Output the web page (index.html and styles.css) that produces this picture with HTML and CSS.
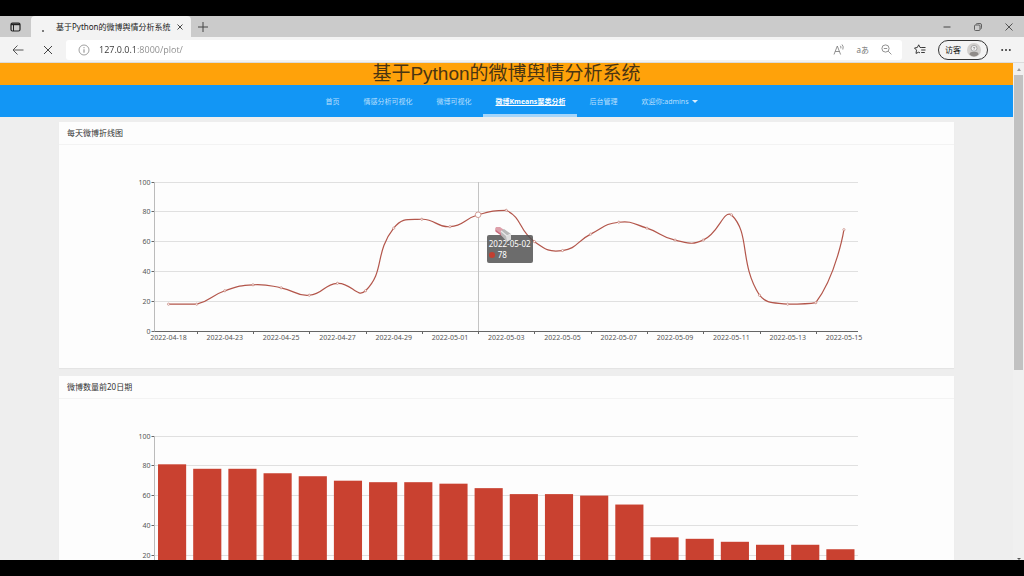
FILE: index.html
```html
<!DOCTYPE html>
<html lang="zh-CN">
<head>
<meta charset="utf-8">
<title>基于Python的微博舆情分析系统</title>
<link rel="stylesheet" href="styles.css">
</head>
<body>
<div class="browser">
  <header class="tabstrip">
    <button class="tab-menu" aria-label="标签页菜单">
      <svg width="11" height="10" viewBox="0 0 11 10"><rect x="1" y="1" width="9" height="8" rx="1.5" fill="none" stroke="#222" stroke-width="1.2"/><path d="M1 2.300h9" stroke="#222" stroke-width="1.800"/><path d="M3.500 3v6" stroke="#222"/></svg>
    </button>
    <div class="tab">
      <span class="tab-spinner"></span>
      <span class="tab-title">基于Python的微博舆情分析系统</span>
      <button aria-label="关闭标签页"><svg width="6" height="6" viewBox="0 0 6 6"><path d="M.5.5l5 5M5.500.5l-5 5" stroke="#333" stroke-width=".9"/></svg></button>
    </div>
    <button class="new-tab" aria-label="新建标签页"><svg width="10" height="10" viewBox="0 0 10 10"><path d="M5 0v10M0 5h10" stroke="#444"/></svg></button>
    <div class="window-buttons">
      <button aria-label="最小化"><svg width="8" height="8" viewBox="0 0 8 8"><path d="M.5 4h7" stroke="#444"/></svg></button>
      <button aria-label="还原"><svg width="8" height="8" viewBox="0 0 8 8"><rect x=".5" y="2" width="5.500" height="5.500" rx="1" fill="none" stroke="#555" stroke-width=".9"/><path d="M2 1.500Q2.200.5 3.200.5H6q1.500 0 1.500 1.500v2.800q0 1-1 1.200" fill="none" stroke="#555" stroke-width=".9"/></svg></button>
      <button aria-label="关闭"><svg width="8" height="8" viewBox="0 0 8 8"><path d="M.5.5l7 7M7.500.5l-7 7" stroke="#444" stroke-width=".9"/></svg></button>
    </div>
  </header>

  <div class="toolbar">
    <button class="back" aria-label="后退"><svg width="12" height="10" viewBox="0 0 12 10"><path d="M5.500.5L1 5l4.500 4.500M1 5h10.500" fill="none" stroke="#555"/></svg></button>
    <button class="stop" aria-label="停止"><svg width="8" height="8" viewBox="0 0 8 8"><path d="M0 0l8 8M8 0L0 8" stroke="#444"/></svg></button>
    <div class="address">
      <svg width="12" height="12" viewBox="0 0 12 12"><circle cx="6" cy="6" r="5" fill="none" stroke="#888" stroke-width=".8"/><path d="M6 5.300v3.400M6 3.200v1" stroke="#777" stroke-width=".9"/></svg>
      <input class="url" type="text" aria-label="地址" value="127.0.0.1:8000/plot/">
      <button aria-label="朗读"><svg width="12" height="12" viewBox="0 0 12 12"><path d="M1 10.500L4.300 2l3.300 8.500M2.200 7.500h4.300M7.300 1.800q1 1 .5 2.600M9 .5q2 2 .8 5" fill="none" stroke="#777" stroke-width=".8"/></svg></button>
      <button class="translate" aria-label="翻译">aあ</button>
      <button aria-label="缩小"><svg width="11" height="11" viewBox="0 0 11 11"><circle cx="4.500" cy="4.500" r="3.600" fill="none" stroke="#777" stroke-width=".8"/><path d="M2.800 4.500h3.400M7.200 7.200l3.200 3.200" stroke="#777" stroke-width=".8"/></svg></button>
    </div>
    <button class="favorites" aria-label="收藏夹"><svg width="12" height="12" viewBox="0 0 12 12"><path d="M7.200 3.500H6.100L4.700.8 3.300 3.500.5 4l2 2.100-.5 3.300 2.700-1.200 1.300.7M7.200 3.500h4.300M7.200 6h4.300M7.200 8.500h3.600" fill="none" stroke="#222" stroke-width=".9"/></svg></button>
    <button class="profile">访客
      <svg width="14" height="14" viewBox="0 0 14 14"><circle cx="7" cy="7" r="7" fill="#d1cfcd"/><path d="M2.500 11.500q0-2.500 2.500-2.500h4q2.500 0 2.500 2.500Q9.500 13.500 7 13.500t-4.500-2" fill="#8f8b88"/><circle cx="7" cy="5.300" r="3" fill="#eee" stroke="#999" stroke-width=".8"/><path d="M6.200 4.600q.8-1 1.500 0 .1.600-.7 1.200M7 6.500v.6" fill="none" stroke="#666" stroke-width=".7"/></svg>
    </button>
    <button class="more" aria-label="更多"><svg width="10" height="4" viewBox="0 0 10 4"><g fill="#333"><circle cx="1.200" cy="2" r="1"/><circle cx="5" cy="2" r="1"/><circle cx="8.800" cy="2" r="1"/></g></svg></button>
  </div>

  <div class="viewport">
    <main class="page">
      <h1 class="banner">基于Python的微博舆情分析系统</h1>
      <nav class="nav">
        <a href="#">首页</a>
        <a href="#">情感分析可视化</a>
        <a href="#">微博可视化</a>
        <a href="#" class="active">微博Kmeans聚类分析</a>
        <a href="#">后台管理</a>
        <a href="#" class="user">欢迎你:admins <i class="caret"></i></a>
      </nav>
      <div class="cards">
        <section class="card">
          <h2>每天微博折线图</h2>
          <div class="chart">
            <svg id="line-chart" viewBox="0 0 895 223"></svg>
            <div class="tooltip">
              <div>2022-05-02</div>
              <div class="tooltip-row"><i class="dot"></i>78</div>
            </div>
            <svg class="pointer" width="20" height="18" viewBox="0 0 20 18"><path d="M1 3l1-2 4 0 7 5-3 5-8-5z" fill="#dda0aa"/><path d="M1.500 4.500l8 6" stroke="#c76b7c" stroke-width="1.500"/><path d="M7 5l3-2 7 5v5l-4 3-6-7z" fill="#b9b9b9"/><path d="M7 5l6 5 4-2" fill="none" stroke="#e8e8e8" stroke-width="1.300"/><path d="M12 10l5-1.500v5l-4 2z" fill="#ddd"/></svg>
          </div>
        </section>
        <section class="card">
          <h2>微博数量前20日期</h2>
          <div class="chart">
            <svg id="bar-chart" viewBox="0 0 895 223"></svg>
          </div>
        </section>
      </div>
    </main>
    <div class="scrollbar">
      <i class="arrow-up"></i>
      <div class="thumb"></div>
      <i class="arrow-down"></i>
    </div>
  </div>
</div>
<script src="script.js"></script>
</body>
</html>
```

FILE: styles.css
```css
* { box-sizing: border-box; }

body {
  margin: 0;
  height: 100vh;
  padding: 16px 0;
  background: #000;
  font-family: "Noto Sans", "Noto Sans CJK SC", sans-serif;
  font-size: 8px;
  color: #333;
  overflow: hidden;
}

svg { display: block; flex: none; }

button {
  display: flex;
  align-items: center;
  justify-content: center;
  flex: none;
  padding: 0;
  border: 0;
  background: none;
  font: inherit;
  color: inherit;
}

.browser {
  height: 100%;
  display: flex;
  flex-direction: column;
  background: #f3f3f3;
}

/* Tabs */
.tabstrip {
  flex: none;
  height: 21px;
  display: flex;
  background: #cbcbcb;
}

.tab-menu { width: 31px; }

.tab {
  display: flex;
  align-items: center;
  width: 160px;
  padding: 0 8px 0 11px;
  border-radius: 4px 4px 0 0;
  background: #f3f3f3;
}

.tab-spinner {
  width: 2px;
  height: 2px;
  margin-top: 8px;
  border-radius: 50%;
  background: #555;
}

.tab-title {
  flex: 1;
  margin-left: 12px;
  white-space: nowrap;
  color: #222;
}

.new-tab { width: 24px; }

.window-buttons {
  display: flex;
  margin-left: auto;
}

.window-buttons button { width: 31px; }

/* Address bar */
.toolbar {
  flex: none;
  height: 26px;
  display: flex;
  align-items: center;
  border-bottom: 1px solid #dcdcdc;
}

.back { width: 36px; }
.stop { width: 24px; }

.address {
  flex: 1;
  display: flex;
  align-items: center;
  height: 20px;
  margin-left: 6px;
  padding: 0 10px 0 12px;
  gap: 12px;
  border-radius: 3px;
  background: #fff;
}

.url {
  flex: 1;
  min-width: 0;
  margin-left: -3px;
  padding: 0;
  border: 0;
  outline: 0;
  font-family: "Open Sans", "Noto Sans CJK SC", sans-serif;
  font-size: 9px;
  color: transparent;
  background: linear-gradient(to right, #333 38px, #8a8a8a 38px);
  background-clip: text;
  -webkit-background-clip: text;
}

.translate { color: #777; }
.favorites { width: 36px; }

.profile {
  width: 50px;
  height: 20px;
  gap: 6px;
  border: 1px solid #333;
  border-radius: 10px;
  color: #111;
}

.more { width: 36px; }

/* Web page */
.viewport {
  flex: 1;
  min-height: 0;
  display: flex;
  background: #eee;
}

.page {
  flex: 1;
  min-width: 0;
  overflow: hidden;
}

.banner {
  margin: 0;
  height: 22px;
  line-height: 22px;
  background: #ffa20a;
  color: #4a3512;
  font-family: "Liberation Sans", "Noto Sans CJK SC", sans-serif;
  font-size: 19px;
  font-weight: 400;
  text-align: center;
}

.nav {
  display: flex;
  justify-content: center;
  height: 32px;
  margin-bottom: 5px;
  padding-left: 10px;
  background: #1296f5;
  font-size: 7px;
}

.nav a {
  display: flex;
  align-items: center;
  padding: 3px 12px 0;
  border-bottom: 3px solid transparent;
  color: #b8dffc;
  text-decoration: none;
  white-space: nowrap;
}

.nav .active {
  border-color: #a5d5fa;
  color: #fff;
  font-weight: 700;
  text-decoration: underline;
}

.caret {
  margin-left: 3px;
  border: 3px solid transparent;
  border-top-color: #d8edfd;
  border-bottom: 0;
}

.cards {
  display: flex;
  flex-direction: column;
  gap: 8px;
  padding: 0 59px;
}

.card {
  background: #fdfdfd;
  box-shadow: 0 1px 1px #e4e4e4;
}

.card h2 {
  margin: 0;
  padding: 0 8px;
  border-bottom: 1px solid #f3f3f3;
  font-size: 8px;
  font-weight: 400;
  line-height: 22px;
  color: #333;
}

.chart { position: relative; }

.chart > svg:first-child {
  width: 100%;
  height: auto;
}

.axis-text {
  font-size: 7px;
  fill: #555;
}

.grid { stroke: #e0e0e0; }
.axis { stroke: #666; }
.axis-y { stroke: #bbb; }
.crosshair { stroke: #c4c4c4; }
.curve { fill: none; stroke: #b3564b; stroke-width: 1.2; }
.point { fill: #fff; stroke: #c98a82; stroke-width: .8; }
.bar { fill: #c94130; }

.tooltip {
  position: absolute;
  left: 47.8%;
  top: 90px;
  padding: 3px 2px;
  border-radius: 2px;
  background: rgba(80, 80, 80, .84);
  color: #fff;
  line-height: 11px;
}

.tooltip-row {
  display: flex;
  align-items: center;
}

.dot {
  width: 6px;
  height: 6px;
  margin-right: 3px;
  border-radius: 50%;
  background: #c23f31;
}

.pointer {
  position: absolute;
  left: 48.6%;
  top: 81px;
}

/* Scrollbar */
.scrollbar {
  flex: none;
  width: 11px;
  display: flex;
  flex-direction: column;
  align-items: center;
  padding-top: 5px;
  background: #f0f0f0;
}

.arrow-up {
  border: 2px solid transparent;
  border-bottom: 3px solid #999;
  border-top: 0;
}

.thumb {
  width: 9px;
  height: 60%;
  margin-top: 4px;
  background: #c1c1c1;
}

.arrow-down {
  margin-top: auto;
  border: 2px solid transparent;
  border-top-color: #555;
  border-bottom: 0;
}
```

FILE: script.js
```js
const daily = [18, 18, 27, 31, 29, 24, 32, 27, 69, 75, 70, 78, 81, 60, 54, 65, 73, 69, 61, 61, 78, 24, 18, 19, 68];
const dates = ['04-18', '04-23', '04-25', '04-27', '04-29', '05-01', '05-03', '05-05', '05-07', '05-09', '05-11', '05-13', '05-15'];
const top20 = [81, 78, 78, 75, 73, 70, 69, 69, 68, 65, 61, 61, 60, 54, 32, 31, 29, 27, 27, 24];
const plot = { left: 95.5, right: 799, top: 37, bottom: 186 };
const yOf = v => plot.bottom - v * (plot.bottom - plot.top) / 100;

function line(x1, y1, x2, y2, cls) {
  return `<line x1="${x1}" y1="${y1}" x2="${x2}" y2="${y2}" class="${cls}"/>`;
}

function axes(from) {
  let out = '';
  for (let v = from; v <= 100; v += 20) {
    const y = Math.floor(yOf(v)) + 0.5;
    out += line(plot.left, y, plot.right, y, v ? 'grid' : 'axis');
    out += line(plot.left - 3, y, plot.left, y, 'axis');
    out += `<text class="axis-text" x="${plot.left - 4}" y="${y + 2}" text-anchor="end">${v}</text>`;
  }
  return out + line(plot.left, plot.top, plot.left, plot.bottom, 'axis-y');
}

// Bezier smoothing whose control points stay inside the bounds of the data.
function smoothPath(pts) {
  const ys = pts.map(p => p[1]);
  const low = Math.min(...ys);
  const high = Math.max(...ys);
  const clamp = p => [p[0], Math.min(high, Math.max(low, p[1]))];
  let d = `M${pts[0]}`;
  let out = pts[0];
  for (let i = 1; i < pts.length; i++) {
    const p = pts[i];
    const prev = pts[i - 1];
    const next = pts[i + 1];
    let cp = p;
    let after = p;
    if (next) {
      const v = [next[0] - prev[0], next[1] - prev[1]];
      const a = Math.hypot(p[0] - prev[0], p[1] - prev[1]);
      const b = Math.hypot(next[0] - p[0], next[1] - p[1]);
      const r = b / (a + b);
      cp = clamp([p[0] - v[0] * 0.5 * (1 - r), p[1] - v[1] * 0.5 * (1 - r)]);
      after = clamp([p[0] + v[0] * 0.5 * r, p[1] + v[1] * 0.5 * r]);
    }
    d += `C${out} ${cp} ${p}`;
    out = after;
  }
  return d;
}

function drawLine() {
  const band = (plot.right - plot.left) / daily.length;
  const pts = daily.map((v, i) => [plot.left + band * (i + 0.5), yOf(v)]);
  let out = axes(0);
  dates.forEach((d, k) => {
    out += `<text class="axis-text" x="${pts[k * 2][0]}" y="195" text-anchor="middle">2022-${d}</text>`;
    if (k) {
      const x = Math.round(pts[k * 2 - 1][0]) + 0.5;
      out += line(x, plot.bottom, x, plot.bottom + 3, 'axis');
    }
  });
  const hover = 11;
  const hx = Math.floor(pts[hover][0]) + 0.5;
  out += line(hx, plot.top, hx, plot.bottom, 'crosshair');
  out += `<path class="curve" d="${smoothPath(pts)}"/>`;
  pts.forEach((p, i) => {
    out += `<circle class="point" cx="${p[0]}" cy="${p[1]}" r="${i === hover ? 2.8 : 1.1}"/>`;
  });
  document.getElementById('line-chart').innerHTML = out;
}

function drawBars() {
  const band = (plot.right - plot.left) / top20.length;
  let out = axes(20);
  top20.forEach((v, i) => {
    out += `<rect class="bar" x="${plot.left + band * (i + 0.1)}" y="${yOf(v)}" width="${band * 0.8}" height="${plot.bottom - yOf(v)}"/>`;
  });
  document.getElementById('bar-chart').innerHTML = out;
}

drawLine();
drawBars();
```
